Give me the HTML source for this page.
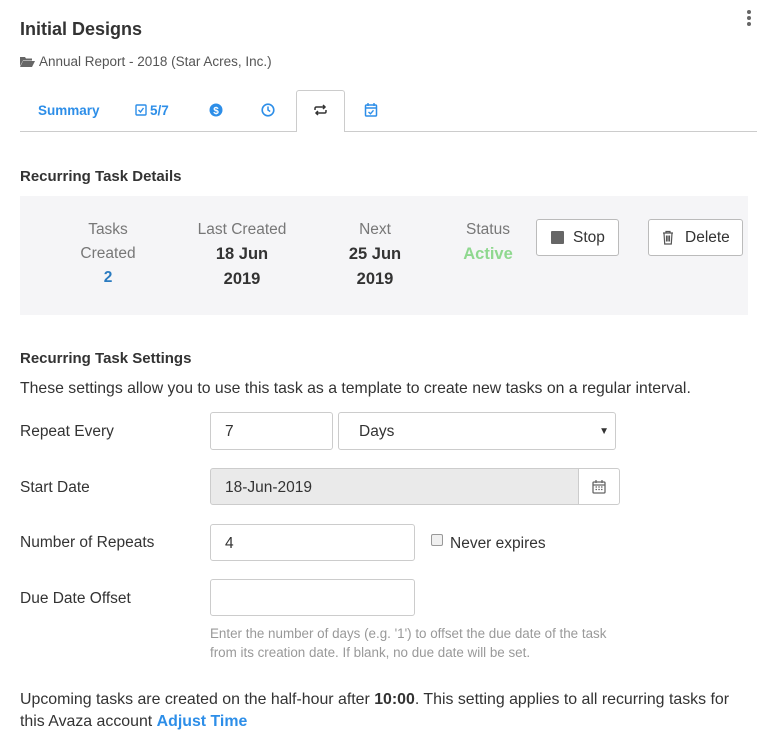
<!DOCTYPE html>
<html><head><style>
body{margin:0;width:768px;height:745px;background:#fff;font-family:"Liberation Sans",sans-serif;color:#333;position:relative;overflow:hidden}
.a{position:absolute;white-space:nowrap}
.inp{position:absolute;border:1px solid #ccc;border-radius:3px;box-sizing:border-box;font-size:15.5px;padding-left:14px;line-height:38px;background:#fff}
.c{position:absolute;text-align:center;font-size:15.5px;line-height:24px;width:130px}
.btn{position:absolute;border:1px solid #bbb;border-radius:3px;box-sizing:border-box;font-size:15.5px;line-height:36px;background:#fff}
</style></head><body>
<div class="a" style="left:20px;top:19px;font-size:18px;font-weight:bold;color:#333">Initial Designs</div>
<div class="a" style="left:747px;top:10px;width:4px">
<div style="width:4px;height:4px;border-radius:2px;background:#666;margin-bottom:2px"></div>
<div style="width:4px;height:4px;border-radius:2px;background:#666;margin-bottom:2px"></div>
<div style="width:4px;height:4px;border-radius:2px;background:#666"></div></div>
<svg class="a" style="left:20px;top:56px" width="15" height="11" viewBox="0 0 15 11"><path d="M0 1h5l1 1.5h6v2H3L0 10z M3 5h12l-3 6H0z" fill="#666"/></svg>
<div class="a" style="left:39px;top:54px;font-size:13.5px;color:#555">Annual Report - 2018 (Star Acres, Inc.)</div>
<div class="a" style="left:20px;top:131px;width:737px;height:1px;background:#ccc"></div>
<div class="a" style="left:296px;top:90px;width:49px;height:42px;border:1px solid #ccc;border-bottom:none;box-sizing:border-box;background:#fff;border-radius:3px 3px 0 0"></div>
<div class="a" style="left:38px;top:103px;font-size:13.5px;font-weight:bold;color:#2d8ee8">Summary</div>
<svg class="a" style="left:135px;top:104px" width="12" height="12" viewBox="0 0 12 12"><rect x="1" y="1" width="10" height="10" rx="1" fill="none" stroke="#2d8ee8" stroke-width="1.4"/><path d="M3.5 6l2 2 3-4" fill="none" stroke="#2d8ee8" stroke-width="1.4"/></svg>
<div class="a" style="left:150px;top:103px;font-size:13.5px;font-weight:bold;color:#2d8ee8">5/7</div>
<svg class="a" style="left:209px;top:103px" width="14" height="14"><circle cx="7" cy="7" r="6.5" fill="#2d8ee8"/><text x="7" y="11" font-size="10" font-weight="bold" text-anchor="middle" fill="#fff" font-family="Liberation Sans">$</text></svg>
<svg class="a" style="left:261px;top:103px" width="14" height="14"><circle cx="7" cy="7" r="5.8" fill="none" stroke="#2d8ee8" stroke-width="1.6"/><path d="M7 3.5V7l2.2 1.5" fill="none" stroke="#2d8ee8" stroke-width="1.5"/></svg>
<svg class="a" style="left:313px;top:104px" width="15" height="12" viewBox="0 0 15 12"><path d="M2 6V4.5Q2 3 3.5 3H12M10 1l2 2-2 2M13 6v1.5Q13 9 11.5 9H3M5 11L3 9l2-2" fill="none" stroke="#333" stroke-width="1.5"/></svg>
<svg class="a" style="left:364px;top:102px" width="14" height="15" viewBox="0 0 14 15"><rect x="1.5" y="3" width="11" height="11" rx="1" fill="none" stroke="#2d8ee8" stroke-width="1.5"/><path d="M1.5 6h11M4 1v3M10 1v3M4.5 10l2 1.8 3-3.5" fill="none" stroke="#2d8ee8" stroke-width="1.4"/></svg>

<div class="a" style="left:20px;top:168px;font-size:15px;font-weight:bold;color:#333">Recurring Task Details</div>
<div class="a" style="left:20px;top:196px;width:728px;height:119px;background:#f5f5f7"></div>
<div class="c" style="left:43px;top:218px;color:#777">Tasks<br>Created<br><b style="color:#2a7bc0">2</b></div>
<div class="c" style="left:177px;top:218px;color:#777">Last Created<br><b style="color:#333;font-size:16.5px">18 Jun<br>2019</b></div>
<div class="c" style="left:310px;top:218px;color:#777">Next<br><b style="color:#333;font-size:16.5px">25 Jun<br>2019</b></div>
<div class="c" style="left:423px;top:218px;color:#777">Status<br><b style="color:#8fd88f;font-size:16.5px">Active</b></div>
<div class="btn" style="left:536px;top:219px;width:83px;height:37px"><span style="position:absolute;left:14px;top:11px;width:13px;height:13px;background:#666;border-radius:1px"></span><span style="position:absolute;left:36px">Stop</span></div>
<div class="btn" style="left:648px;top:219px;width:95px;height:37px"><svg style="position:absolute;left:13px;top:10px" width="12" height="15" viewBox="0 0 12 15"><path d="M1 3h10M4 3V1.5h4V3M2 3l.7 11h6.6L10 3M4.5 5.5v6M6 5.5v6M7.5 5.5v6" fill="none" stroke="#555" stroke-width="1.2"/></svg><span style="position:absolute;left:36px">Delete</span></div>

<div class="a" style="left:20px;top:350px;font-size:15px;font-weight:bold;color:#333">Recurring Task Settings</div>
<div class="a" style="left:20px;top:380px;font-size:15.8px;color:#333">These settings allow you to use this task as a template to create new tasks on a regular interval.</div>
<div class="a" style="left:20px;top:423px;font-size:15.5px">Repeat Every</div>
<div class="a" style="left:20px;top:479px;font-size:15.5px">Start Date</div>
<div class="a" style="left:20px;top:534px;font-size:15.5px">Number of Repeats</div>
<div class="a" style="left:20px;top:590px;font-size:15.5px">Due Date Offset</div>
<div class="inp" style="left:210px;top:412px;width:123px;height:38px">7</div>
<div class="inp" style="left:338px;top:412px;width:278px;height:38px;padding-left:20px">Days<span style="position:absolute;right:6px;top:0;font-size:10px">&#9660;</span></div>
<div class="inp" style="left:210px;top:468px;width:369px;height:37px;background:#eaeaea;line-height:37px;border-radius:3px 0 0 3px">18-Jun-2019</div>
<div class="inp" style="left:578px;top:468px;width:42px;height:37px;border-radius:0 3px 3px 0;padding:0"><svg style="position:absolute;left:13px;top:10px" width="14" height="15" viewBox="0 0 14 15"><rect x="1" y="3" width="12" height="11" rx="1" fill="none" stroke="#666" stroke-width="1.3"/><path d="M1 6h12M4 1v3M10 1v3" stroke="#666" stroke-width="1.3"/><path d="M3.5 8h1.5M6.3 8h1.5M9 8h1.5M3.5 10.5h1.5M6.3 10.5h1.5M9 10.5h1.5" stroke="#666" stroke-width="1.2"/></svg></div>
<div class="inp" style="left:210px;top:524px;width:205px;height:37px;line-height:37px">4</div>
<div class="a" style="left:431px;top:534px;width:12px;height:12px;border:1px solid #999;border-radius:2px;background:#f0f0f0;box-sizing:border-box"></div>
<div class="a" style="left:450px;top:535px;font-size:15.5px">Never expires</div>
<div class="inp" style="left:210px;top:579px;width:205px;height:37px"></div>
<div class="a" style="left:210px;top:624px;font-size:13.4px;color:#999;line-height:19px">Enter the number of days (e.g. '1') to offset the due date of the task<br>from its creation date. If blank, no due date will be set.</div>
<div class="a" style="left:20px;top:689px;font-size:15.9px;line-height:22px">Upcoming tasks are created on the half-hour after <b>10:00</b>. This setting applies to all recurring tasks for<br>this Avaza account <b style="color:#2d8ee8">Adjust Time</b></div>
</body></html>
